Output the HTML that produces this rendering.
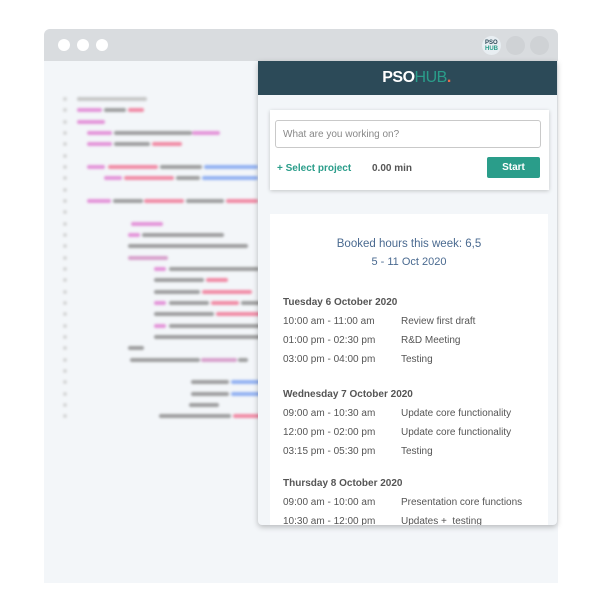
<!DOCTYPE html>
<html><head><meta charset="utf-8"><style>
*{margin:0;padding:0;box-sizing:border-box}
body{width:600px;height:600px;background:#fff;font-family:"Liberation Sans",sans-serif;position:relative;overflow:hidden}
.win{position:absolute;left:44px;top:29px;width:514px;height:554px;background:#f3f6f9;border-radius:6px 6px 0 0;overflow:hidden}
.bar{position:absolute;left:0;top:0;width:514px;height:32px;background:#d9dcdf}
.dot{position:absolute;width:12px;height:12px;border-radius:50%;background:#fff;top:10px}
.cdot{position:absolute;width:19px;height:19px;border-radius:50%;background:#cfd2d5;top:7px}
.code{position:absolute;left:0;top:0;filter:blur(1.4px);opacity:.8}
.ln{position:absolute;height:4px;border-radius:2px}
.pop{position:absolute;left:258px;top:61px;width:299px;height:464px;background:#f3f6f9;box-shadow:0 2px 6px rgba(0,0,0,.25);border-radius:0 0 4px 4px;overflow:hidden}
.hdr{height:34px;background:#2c4a58;text-align:center;color:#fff;font-weight:bold;font-size:16px;line-height:34px;letter-spacing:-0.5px;padding-left:18px}
.card{position:absolute;left:12px;top:49px;width:279px;height:80px;background:#fff;box-shadow:0 1px 4px rgba(0,0,0,.2)}
.inp{position:absolute;left:5px;top:10px;width:266px;height:28px;border:1px solid #c9c9c9;border-radius:3px;font-size:10px;color:#888;padding:8px 7px}
.sel{position:absolute;left:7px;top:53px;font-size:10px;color:#2a9d8a;font-weight:bold}
.min{position:absolute;left:102px;top:53px;font-size:10px;color:#555;font-weight:bold}
.btn{position:absolute;left:217px;top:47px;width:53px;height:21px;background:#2a9d8a;border-radius:2px;color:#fff;font-size:10px;text-align:center;line-height:21px;font-weight:bold}
.list{position:absolute;left:12px;top:153px;width:278px;height:320px;background:#fff}
.bk{position:absolute;width:100%;text-align:center;color:#4a6a90;font-size:11.5px}
.d{position:absolute;left:13px;font-size:10px;color:#555;font-weight:bold}
.r{position:absolute;left:13px;font-size:10px;color:#555;white-space:nowrap}
.r span{position:absolute;left:118px;white-space:nowrap}
</style></head><body>
<div class="win">
<div class="bar"></div>
<div class="dot" style="left:14px"></div><div class="dot" style="left:33px"></div><div class="dot" style="left:52px"></div>
<div class="cdot" style="left:438px;background:#e8eef2"></div>
<div style="position:absolute;left:441px;top:11px;font-size:6px;font-weight:bold;color:#2c4a58;line-height:6px">PSO<br><span style="color:#2a9d8a">HUB</span></div>
<div class="cdot" style="left:462px"></div><div class="cdot" style="left:486px"></div>
<div class="code">
<div class="ln" style="left:19px;top:68px;width:4px;background:#ccc"></div><div class="ln" style="left:33px;top:68px;width:70px;background:#bbb"></div>
<div class="ln" style="left:19px;top:79px;width:4px;background:#ccc"></div><div class="ln" style="left:33px;top:79px;width:25px;background:#e07bd0"></div><div class="ln" style="left:60px;top:79px;width:22px;background:#888"></div><div class="ln" style="left:84px;top:79px;width:16px;background:#f07090"></div>
<div class="ln" style="left:19px;top:91px;width:4px;background:#ccc"></div><div class="ln" style="left:33px;top:91px;width:28px;background:#e07bd0"></div>
<div class="ln" style="left:19px;top:102px;width:4px;background:#ccc"></div><div class="ln" style="left:43px;top:102px;width:25px;background:#e07bd0"></div><div class="ln" style="left:70px;top:102px;width:78px;background:#888"></div><div class="ln" style="left:148px;top:102px;width:28px;background:#e07bd0"></div>
<div class="ln" style="left:19px;top:113px;width:4px;background:#ccc"></div><div class="ln" style="left:43px;top:113px;width:25px;background:#e07bd0"></div><div class="ln" style="left:70px;top:113px;width:36px;background:#888"></div><div class="ln" style="left:108px;top:113px;width:30px;background:#f07090"></div>
<div class="ln" style="left:19px;top:125px;width:4px;background:#ccc"></div>
<div class="ln" style="left:19px;top:136px;width:4px;background:#ccc"></div><div class="ln" style="left:43px;top:136px;width:18px;background:#e07bd0"></div><div class="ln" style="left:64px;top:136px;width:50px;background:#f07090"></div><div class="ln" style="left:116px;top:136px;width:42px;background:#888"></div><div class="ln" style="left:160px;top:136px;width:54px;background:#7aa0f0"></div>
<div class="ln" style="left:19px;top:147px;width:4px;background:#ccc"></div><div class="ln" style="left:60px;top:147px;width:18px;background:#e07bd0"></div><div class="ln" style="left:80px;top:147px;width:50px;background:#f07090"></div><div class="ln" style="left:132px;top:147px;width:24px;background:#888"></div><div class="ln" style="left:158px;top:147px;width:56px;background:#7aa0f0"></div>
<div class="ln" style="left:19px;top:159px;width:4px;background:#ccc"></div>
<div class="ln" style="left:19px;top:170px;width:4px;background:#ccc"></div><div class="ln" style="left:43px;top:170px;width:24px;background:#e07bd0"></div><div class="ln" style="left:69px;top:170px;width:30px;background:#888"></div><div class="ln" style="left:100px;top:170px;width:40px;background:#f07090"></div><div class="ln" style="left:142px;top:170px;width:38px;background:#888"></div><div class="ln" style="left:182px;top:170px;width:32px;background:#f07090"></div>
<div class="ln" style="left:19px;top:181px;width:4px;background:#ccc"></div>
<div class="ln" style="left:19px;top:193px;width:4px;background:#ccc"></div><div class="ln" style="left:87px;top:193px;width:32px;background:#e07bd0"></div>
<div class="ln" style="left:19px;top:204px;width:4px;background:#ccc"></div><div class="ln" style="left:84px;top:204px;width:12px;background:#e07bd0"></div><div class="ln" style="left:98px;top:204px;width:82px;background:#888"></div>
<div class="ln" style="left:19px;top:215px;width:4px;background:#ccc"></div><div class="ln" style="left:84px;top:215px;width:120px;background:#888"></div>
<div class="ln" style="left:19px;top:227px;width:4px;background:#ccc"></div><div class="ln" style="left:84px;top:227px;width:40px;background:#d08ac0"></div>
<div class="ln" style="left:19px;top:238px;width:4px;background:#ccc"></div><div class="ln" style="left:110px;top:238px;width:12px;background:#e07bd0"></div><div class="ln" style="left:125px;top:238px;width:90px;background:#888"></div>
<div class="ln" style="left:19px;top:249px;width:4px;background:#ccc"></div><div class="ln" style="left:110px;top:249px;width:50px;background:#888"></div><div class="ln" style="left:162px;top:249px;width:22px;background:#f07090"></div>
<div class="ln" style="left:19px;top:261px;width:4px;background:#ccc"></div><div class="ln" style="left:110px;top:261px;width:46px;background:#888"></div><div class="ln" style="left:158px;top:261px;width:50px;background:#f07090"></div>
<div class="ln" style="left:19px;top:272px;width:4px;background:#ccc"></div><div class="ln" style="left:110px;top:272px;width:12px;background:#e07bd0"></div><div class="ln" style="left:125px;top:272px;width:40px;background:#888"></div><div class="ln" style="left:167px;top:272px;width:28px;background:#f07090"></div><div class="ln" style="left:197px;top:272px;width:20px;background:#888"></div>
<div class="ln" style="left:19px;top:283px;width:4px;background:#ccc"></div><div class="ln" style="left:110px;top:283px;width:60px;background:#888"></div><div class="ln" style="left:172px;top:283px;width:45px;background:#f07090"></div>
<div class="ln" style="left:19px;top:295px;width:4px;background:#ccc"></div><div class="ln" style="left:110px;top:295px;width:12px;background:#e07bd0"></div><div class="ln" style="left:125px;top:295px;width:92px;background:#888"></div>
<div class="ln" style="left:19px;top:306px;width:4px;background:#ccc"></div><div class="ln" style="left:110px;top:306px;width:107px;background:#888"></div>
<div class="ln" style="left:19px;top:317px;width:4px;background:#ccc"></div><div class="ln" style="left:84px;top:317px;width:16px;background:#888"></div>
<div class="ln" style="left:19px;top:329px;width:4px;background:#ccc"></div><div class="ln" style="left:86px;top:329px;width:70px;background:#888"></div><div class="ln" style="left:157px;top:329px;width:36px;background:#d08ac0"></div><div class="ln" style="left:194px;top:329px;width:10px;background:#888"></div>
<div class="ln" style="left:19px;top:340px;width:4px;background:#ccc"></div>
<div class="ln" style="left:19px;top:351px;width:4px;background:#ccc"></div><div class="ln" style="left:147px;top:351px;width:38px;background:#888"></div><div class="ln" style="left:187px;top:351px;width:30px;background:#7aa0f0"></div>
<div class="ln" style="left:19px;top:363px;width:4px;background:#ccc"></div><div class="ln" style="left:147px;top:363px;width:38px;background:#888"></div><div class="ln" style="left:187px;top:363px;width:30px;background:#7aa0f0"></div>
<div class="ln" style="left:19px;top:374px;width:4px;background:#ccc"></div><div class="ln" style="left:145px;top:374px;width:30px;background:#888"></div>
<div class="ln" style="left:19px;top:385px;width:4px;background:#ccc"></div><div class="ln" style="left:115px;top:385px;width:72px;background:#888"></div><div class="ln" style="left:189px;top:385px;width:28px;background:#f07090"></div>
</div>
</div>
<div class="pop">
<div class="hdr">PSO<span style="color:#2a9d8a;font-weight:normal">HUB</span><span style="color:#e86a4a">.</span></div>
<div class="card">
<div class="inp">What are you working on?</div>
<div class="sel">+ Select project</div>
<div class="min">0.00 min</div>
<div class="btn">Start</div>
</div>
<div class="list">
<div class="bk" style="top:24px">Booked hours this week: 6,5</div>
<div class="bk" style="top:42px;font-size:11px">5 - 11 Oct 2020</div>
<div class="d" style="top:83px">Tuesday 6 October 2020</div>
<div class="r" style="top:102px">10:00 am - 11:00 am<span>Review first draft</span></div>
<div class="r" style="top:121px">01:00 pm - 02:30 pm<span>R&amp;D Meeting</span></div>
<div class="r" style="top:140px">03:00 pm - 04:00 pm<span>Testing</span></div>
<div class="d" style="top:175px">Wednesday 7 October 2020</div>
<div class="r" style="top:194px">09:00 am - 10:30 am<span>Update core functionality</span></div>
<div class="r" style="top:213px">12:00 pm - 02:00 pm<span>Update core functionality</span></div>
<div class="r" style="top:232px">03:15 pm - 05:30 pm<span>Testing</span></div>
<div class="d" style="top:264px">Thursday 8 October 2020</div>
<div class="r" style="top:283px">09:00 am - 10:00 am<span>Presentation core functions</span></div>
<div class="r" style="top:302px">10:30 am - 12:00 pm<span>Updates +&nbsp; testing</span></div>
</div>
</div>
</body></html>
